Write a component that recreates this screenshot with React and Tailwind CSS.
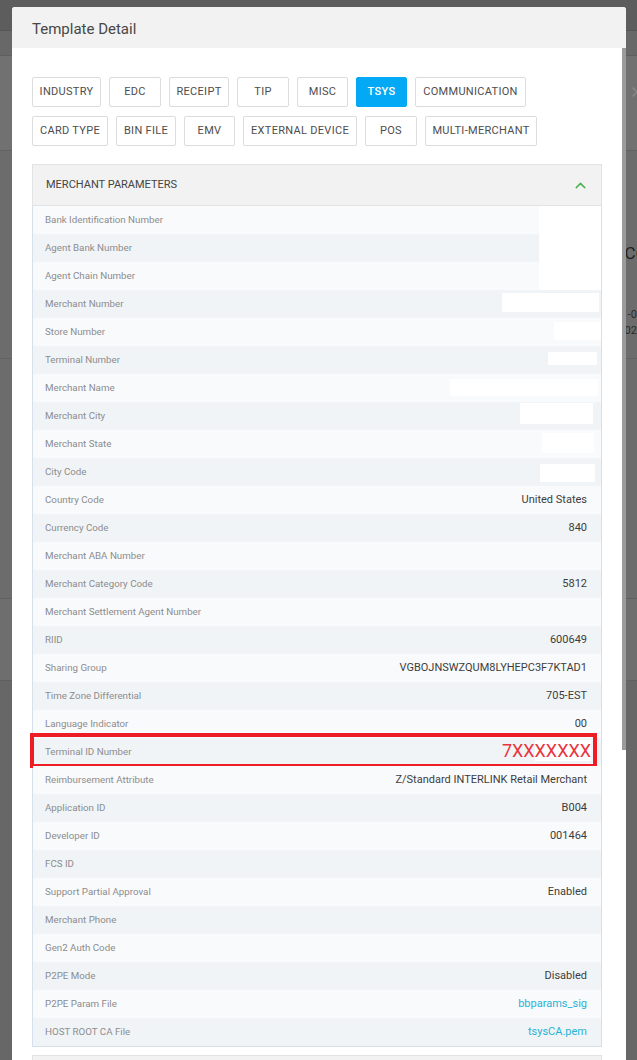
import React from "react";
import { ChevronUp, ChevronRight } from "lucide-react";

const tabsTop = [
	{ name: "INDUSTRY", w: "w-[69px]" },
	{ name: "EDC", w: "w-[52px]" },
	{ name: "RECEIPT", w: "w-[60px]" },
	{ name: "TIP", w: "w-[52px]" },
	{ name: "MISC", w: "w-[51px]" },
	{ name: "TSYS", w: "w-[51px]" },
	{ name: "COMMUNICATION", w: "w-[111px]" },
];
const tabsBottom = [
	{ name: "CARD TYPE", w: "w-[76px]" },
	{ name: "BIN FILE", w: "w-[60px]" },
	{ name: "EMV", w: "w-[51px]" },
	{ name: "EXTERNAL DEVICE", w: "w-[114px]" },
	{ name: "POS", w: "w-[52px]" },
	{ name: "MULTI-MERCHANT", w: "w-[112px]" },
];

const rows = [
	{ label: "Bank Identification Number", redact: "left-[506px] right-0 top-0 bottom-0" },
	{ label: "Agent Bank Number", redact: "left-[506px] right-0 top-0 bottom-0" },
	{ label: "Agent Chain Number", redact: "left-[506px] right-0 top-0 bottom-0" },
	{ label: "Merchant Number", redact: "left-[469px] w-[97px] top-[3px] h-[19px]" },
	{ label: "Store Number", redact: "left-[521px] w-[47px] top-[4px] h-[18px]" },
	{ label: "Terminal Number", redact: "left-[515px] w-[49px] top-[6px] h-[13px]" },
	{ label: "Merchant Name", redact: "left-[417px] w-[148px] top-[5px] h-[17px]" },
	{ label: "Merchant City", redact: "left-[487px] w-[73px] top-[1px] h-[21px]" },
	{ label: "Merchant State", redact: "left-[509px] w-[52px] top-[3px] h-[20px]" },
	{ label: "City Code", redact: "left-[507px] w-[55px] top-[6px] h-[18px]" },
	{ label: "Country Code", value: "United States" },
	{ label: "Currency Code", value: "840" },
	{ label: "Merchant ABA Number" },
	{ label: "Merchant Category Code", value: "5812" },
	{ label: "Merchant Settlement Agent Number" },
	{ label: "RIID", value: "600649" },
	{ label: "Sharing Group", value: "VGBOJNSWZQUM8LYHEPC3F7KTAD1" },
	{ label: "Time Zone Differential", value: "705-EST" },
	{ label: "Language Indicator", value: "00" },
	{ label: "Terminal ID Number", tid: true },
	{ label: "Reimbursement Attribute", value: "Z/Standard INTERLINK Retail Merchant" },
	{ label: "Application ID", value: "B004" },
	{ label: "Developer ID", value: "001464" },
	{ label: "FCS ID" },
	{ label: "Support Partial Approval", value: "Enabled" },
	{ label: "Merchant Phone" },
	{ label: "Gen2 Auth Code" },
	{ label: "P2PE Mode", value: "Disabled" },
	{ label: "P2PE Param File", value: "bbparams_sig", link: true },
	{ label: "HOST ROOT CA File", value: "tsysCA.pem", link: true },
];

function Tab({ tab }) {
	const active = tab.name === "TSYS";
	return (
		<button
			className={
				active
					? `${tab.w} h-[30px] rounded-[2px] bg-[#03a9f4] border border-[#03a9f4] text-white text-[11px] font-medium tracking-[0.3px]`
					: `${tab.w} h-[30px] rounded-[2px] bg-white border border-[#dcdcdc] text-[#4d4d4d] text-[11px] tracking-[0.3px]`
			}
		>
			{tab.name}
		</button>
	);
}

function Row({ row, index }) {
	const bg = index % 2 === 0 ? "bg-[#f9fafc]" : "bg-[#f1f4f7]";
	return (
		<div className={`relative flex items-center justify-between h-[28px] pl-[12px] pr-[14px] ${bg}`}>
			<span className="text-[9.75px] text-[#8c8c8c]">{row.label}</span>
			{row.value && (
				<span className={row.link ? "text-[11px] text-[#1fb3d6]" : "text-[11px] text-[#3d3d3d]"}>
					{row.value}
				</span>
			)}
			{row.tid && (
				<span className="text-[18px] leading-none text-[#e8343b] -mr-[4px] -mt-[2px]">
					7XX<span className="bg-white">XXXXX</span>
				</span>
			)}
			{row.redact && <div className={`absolute bg-white ${row.redact}`} />}
			{row.tid && (
				<div className="absolute -left-[3px] right-[4px] -top-[5px] -bottom-[2px] border-4 border-[#ee1c25]" />
			)}
		</div>
	);
}

function Backdrop() {
	return (
		<div className="flex flex-col">
			<div className="h-[31px] bg-[#5d5d5d] border-b border-[#565656]" />
			<div className="h-[25px] bg-[#686868] border-b border-[#5f5f5f]" />
			<div className="h-[95px] bg-[#717171] border-b border-[#626262] flex items-start justify-end pt-[28px]">
				<ChevronRight size={16} className="text-[#8a8a8a] -mr-[6px]" />
			</div>
			<div className="h-[208px] bg-[#6c6c6c] border-b border-[#626262] flex flex-col items-end pt-[94px]">
				<span className="text-[17px] text-[#1e1e1e] leading-none -mr-[8px]">C6</span>
				<span className="mt-[47px] text-[11px] text-[#2a2a2a] leading-none -mr-[6px]">-05</span>
				<span className="mt-[5px] text-[11px] text-[#2a2a2a] leading-none -mr-[6px]">023</span>
			</div>
			<div className="h-[240px] bg-[#6c6c6c] border-b border-[#606060]" />
			<div className="h-[82px] bg-[#6e6e6e] border-b border-[#606060]" />
			<div className="h-[400px] bg-[#676767]" />
		</div>
	);
}

export default function App() {
	return (
		<div className="relative h-[1060px] overflow-hidden font-['Roboto',sans-serif]">
			<Backdrop />

			<div className="absolute left-[12px] top-[7px] w-[614px] bg-white rounded-t-[3px]">
				<div className="h-[41px] flex items-center px-[20px] pt-[3px] bg-[#f2f2f2] rounded-t-[3px]">
					<h2 className="text-[15px] text-[#474747]">Template Detail</h2>
				</div>

				<div className="relative pl-[20px] pr-[24px] pt-[29px]">
					<div className="absolute right-0 top-0 w-[4px] h-[702px] bg-[#9b9b9b]" />

					<div className="flex flex-col gap-[9px]">
						<div className="flex gap-[8px]">
							{tabsTop.map((t) => (
								<Tab key={t.name} tab={t} />
							))}
						</div>
						<div className="flex gap-[8px]">
							{tabsBottom.map((t) => (
								<Tab key={t.name} tab={t} />
							))}
						</div>
					</div>

					<div className="mt-[18px]">
						<div className="h-[42px] flex items-center justify-between pl-[13px] pr-[12px] bg-[#f2f2f2] border border-[#e3e3e3]">
							<span className="text-[11px] text-[#444]">MERCHANT PARAMETERS</span>
							<ChevronUp size={17} strokeWidth={2} className="text-[#4caf50]" />
						</div>
						<div className="border-x border-b border-[#d5e0ea]">
							{rows.map((r, i) => (
								<Row key={r.label} row={r} index={i} />
							))}
						</div>
					</div>

					<div className="mt-[8px] h-[42px] border border-[#e3e3e3] bg-[#f2f2f2]" />
				</div>
			</div>
		</div>
	);
}
